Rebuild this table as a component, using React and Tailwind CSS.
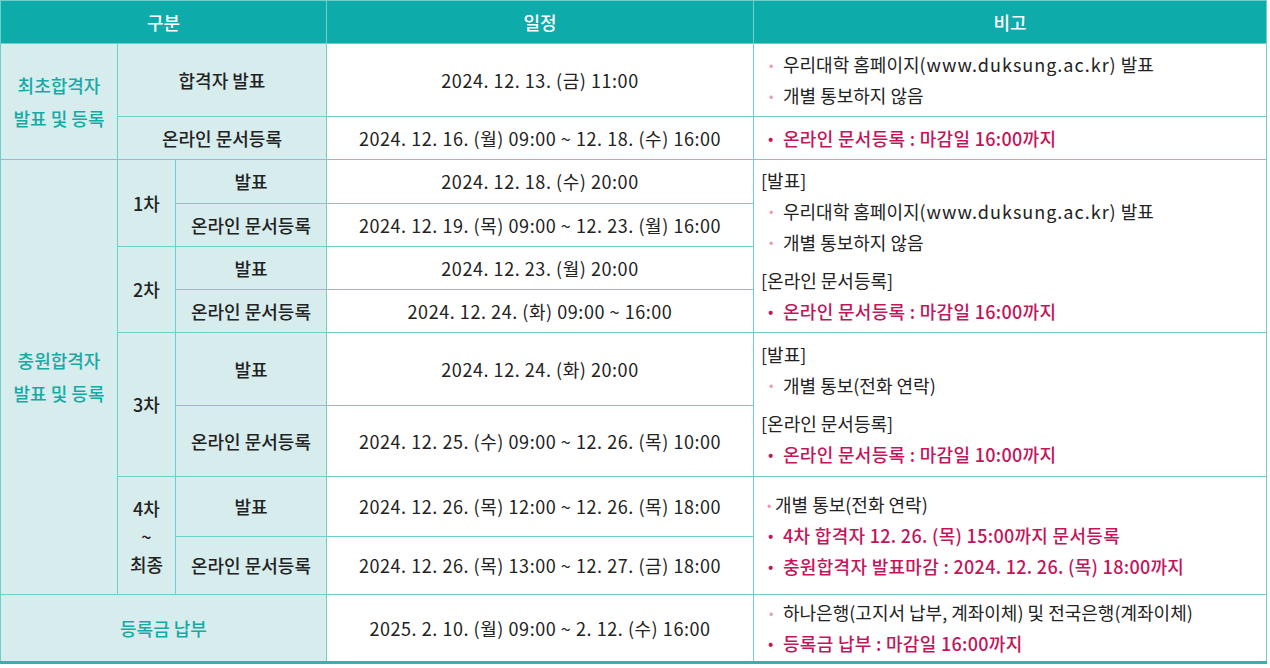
import React from 'react';

const line = 'border border-[#6fcfcb]';
const head = `${line} bg-[#0eabab] text-white font-medium text-[18px]`;
const lab = `${line} bg-[#d7ecec] text-[#222] font-medium text-center`;
const labTeal = `${line} bg-[#d7ecec] text-[#17a9a6] font-medium text-center leading-[33px]`;
const date = `${line} bg-white text-[#222] text-center tracking-[0.55px]`;
const note = `${line} bg-white text-[#222] text-left align-middle pl-[7px]`;

const Dot = ({ children }) => (
  <div className="flex items-center h-[31px]">
    <span className="w-[22px] pl-[8px] text-[#ec9ab3] text-[13px]">•</span>
    <span>{children}</span>
  </div>
);

const Red = ({ children }) => (
  <div className="flex items-center h-[31px] text-[#c4145a] font-medium tracking-[0.3px]">
    <span className="w-[22px] pl-[7px] text-[15px]">•</span>
    <span>{children}</span>
  </div>
);

const Title = ({ children }) => (
  <div className="h-[30px] flex items-center">{children}</div>
);

const Url = () => <span className="tracking-[1px]">(www.duksung.ac.kr)</span>;

export default function App() {
  return (
    <div
      className="bg-white w-[1270px] h-[668px] text-[18px]"
      style={{ fontFamily: '"Noto Sans CJK KR", "Noto Sans", sans-serif' }}
    >
      <table className="table-fixed border-collapse w-[1266px] border-b-[3px] border-b-[#2db5b2]">
        <colgroup>
          <col className="w-[117px]" />
          <col className="w-[58px]" />
          <col className="w-[151px]" />
          <col className="w-[427px]" />
          <col className="w-[513px]" />
        </colgroup>
        <thead>
          <tr className="h-[43px]">
            <th colSpan={3} className={head}>구분</th>
            <th className={head}>일정</th>
            <th className={head}>비고</th>
          </tr>
        </thead>
        <tbody>
          {/* 최초합격자 */}
          <tr className="h-[73px]">
            <td rowSpan={2} className={labTeal}>최초합격자<br />발표 및 등록</td>
            <td colSpan={2} className={lab}>합격자 발표</td>
            <td className={date}>2024. 12. 13. (금) 11:00</td>
            <td className={note}>
              <Dot>우리대학 홈페이지<Url /> 발표</Dot>
              <Dot>개별 통보하지 않음</Dot>
            </td>
          </tr>
          <tr className="h-[43px]">
            <td colSpan={2} className={lab}>온라인 문서등록</td>
            <td className={date}>2024. 12. 16. (월) 09:00 ~ 12. 18. (수) 16:00</td>
            <td className={note}>
              <Red>온라인 문서등록 : 마감일 16:00까지</Red>
            </td>
          </tr>

          {/* 충원합격자 1차 */}
          <tr className="h-[44px]">
            <td rowSpan={8} className={labTeal}>충원합격자<br />발표 및 등록</td>
            <td rowSpan={2} className={lab}>1차</td>
            <td className={lab}>발표</td>
            <td className={date}>2024. 12. 18. (수) 20:00</td>
            <td rowSpan={4} className={note}>
              <Title>[발표]</Title>
              <Dot>우리대학 홈페이지<Url /> 발표</Dot>
              <Dot>개별 통보하지 않음</Dot>
              <div className="h-[8px]" />
              <Title>[온라인 문서등록]</Title>
              <Red>온라인 문서등록 : 마감일 16:00까지</Red>
            </td>
          </tr>
          <tr className="h-[43px]">
            <td className={lab}>온라인 문서등록</td>
            <td className={date}>2024. 12. 19. (목) 09:00 ~ 12. 23. (월) 16:00</td>
          </tr>

          {/* 2차 */}
          <tr className="h-[43px]">
            <td rowSpan={2} className={lab}>2차</td>
            <td className={lab}>발표</td>
            <td className={date}>2024. 12. 23. (월) 20:00</td>
          </tr>
          <tr className="h-[43px]">
            <td className={lab}>온라인 문서등록</td>
            <td className={date}>2024. 12. 24. (화) 09:00 ~ 16:00</td>
          </tr>

          {/* 3차 */}
          <tr className="h-[73px]">
            <td rowSpan={2} className={lab}>3차</td>
            <td className={lab}>발표</td>
            <td className={date}>2024. 12. 24. (화) 20:00</td>
            <td rowSpan={2} className={note}>
              <Title>[발표]</Title>
              <Dot>개별 통보(전화 연락)</Dot>
              <div className="h-[8px]" />
              <Title>[온라인 문서등록]</Title>
              <Red>온라인 문서등록 : 마감일 10:00까지</Red>
            </td>
          </tr>
          <tr className="h-[71px]">
            <td className={lab}>온라인 문서등록</td>
            <td className={date}>2024. 12. 25. (수) 09:00 ~ 12. 26. (목) 10:00</td>
          </tr>

          {/* 4차 ~ 최종 */}
          <tr className="h-[60px]">
            <td rowSpan={2} className={`${lab} leading-[28px]`}>4차<br />~<br />최종</td>
            <td className={lab}>발표</td>
            <td className={date}>2024. 12. 26. (목) 12:00 ~ 12. 26. (목) 18:00</td>
            <td rowSpan={2} className={note}>
              <div className="flex items-center h-[31px]">
                <span className="w-[14px] pl-[6px] text-[#ec9ab3] text-[13px]">•</span>
                <span>개별 통보(전화 연락)</span>
              </div>
              <Red>4차 합격자 12. 26. (목) 15:00까지 문서등록</Red>
              <Red>충원합격자 발표마감 : 2024. 12. 26. (목) 18:00까지</Red>
            </td>
          </tr>
          <tr className="h-[58px]">
            <td className={lab}>온라인 문서등록</td>
            <td className={date}>2024. 12. 26. (목) 13:00 ~ 12. 27. (금) 18:00</td>
          </tr>

          {/* 등록금 납부 */}
          <tr className="h-[68px]">
            <td colSpan={3} className={labTeal}>등록금 납부</td>
            <td className={date}>2025. 2. 10. (월) 09:00 ~ 2. 12. (수) 16:00</td>
            <td className={note}>
              <Dot>하나은행(고지서 납부, 계좌이체) 및 전국은행(계좌이체)</Dot>
              <Red>등록금 납부 : 마감일 16:00까지</Red>
            </td>
          </tr>
        </tbody>
      </table>
    </div>
  );
}
